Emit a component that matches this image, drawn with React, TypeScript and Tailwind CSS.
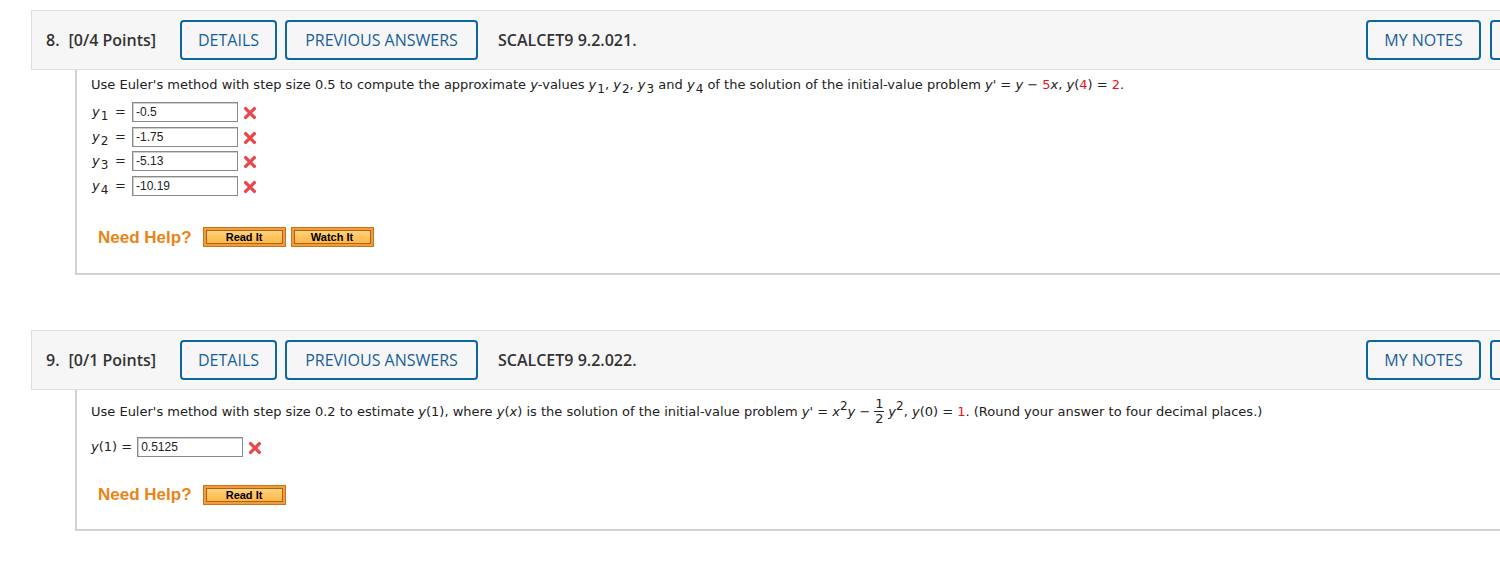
import React from "react";

const BODY = { fontFamily: "'DejaVu Sans', Verdana, sans-serif" };
const HEAD = { fontFamily: "'Open Sans', 'Noto Sans', sans-serif" };
const ARIAL = { fontFamily: "'Liberation Sans', Arial, sans-serif" };

function WrongMark() {
  return (
    <svg width="14" height="14" viewBox="0 0 16 16" className="ml-[5px] mt-[2px] shrink-0">
      <path d="M3 3 L13 13 M13 3 L3 13" stroke="#e8474c" strokeWidth="3.8" strokeLinecap="round" />
    </svg>
  );
}

function HeadButton({ label, width }: { label?: string; width: string }) {
  return (
    <button
      className={`${width} h-10 shrink-0 rounded-[4px] border-2 border-[#0d66a1] text-[16px] text-[#16609a]`}
      style={HEAD}
    >
      {label}
    </button>
  );
}

function QuestionHeader({ num, points, code }: { num: string; points: string; code: string }) {
  return (
    <div className="flex h-[60px] w-[1700px] items-center border border-[#dedede] bg-[#f6f6f6] pl-[14px] pr-[50px]" style={HEAD}>
      <span className="w-[134px] text-[16px] font-semibold text-[#333]">
        {num}
        <span className="ml-[9px]">{points}</span>
      </span>
      <div className="flex gap-2">
        <HeadButton label="DETAILS" width="w-[97px]" />
        <HeadButton label="PREVIOUS ANSWERS" width="w-[193px]" />
      </div>
      <span className="ml-[20px] text-[16px] font-semibold text-[#333]">{code}</span>
      <div className="ml-auto flex gap-[9px]">
        <HeadButton label="MY NOTES" width="w-[115px]" />
        {/* next header button, only its left edge fits in the window */}
        <HeadButton width="w-[190px]" />
      </div>
    </div>
  );
}

function HelpButton({ label }: { label: string }) {
  return (
    <span className="inline-flex h-5 w-[83px] items-center justify-center border border-[#c8741e] bg-[#f49c3a] p-[2px]">
      <span
        className="flex h-full w-full items-center justify-center border border-[#a8641c] bg-gradient-to-b from-[#ffd27a] to-[#fdb743] text-[11px] font-bold text-black"
        style={ARIAL}
      >
        {label}
      </span>
    </span>
  );
}

function NeedHelp({ watch }: { watch?: boolean }) {
  return (
    <div className="flex items-center">
      <span className="mr-[11px] text-[17px] font-bold text-[#ea8414]" style={ARIAL}>
        Need Help?
      </span>
      <div className="flex gap-[5px]">
        <HelpButton label="Read It" />
        {watch && <HelpButton label="Watch It" />}
      </div>
    </div>
  );
}

function Y({ sub }: { sub?: string }) {
  return (
    <span>
      <i>y</i>
      {sub && <span className="relative top-[4px] ml-px text-[12px]">{sub}</span>}
    </span>
  );
}

function AnswerInput({ value, width }: { value: string; width: string }) {
  return (
    <div
      className={`${width} flex h-5 items-center border border-[#8a8a8a] px-[3px] text-[12px] text-[#222] shadow-[inset_1px_1px_0_#cfcfcf]`}
      style={ARIAL}
    >
      {value}
    </div>
  );
}

function Red({ children }: { children: React.ReactNode }) {
  return <span className="text-[#e8121a]">{children}</span>;
}

export default function App() {
  const rows = [
    ["1", "-0.5"],
    ["2", "-1.75"],
    ["3", "-5.13"],
    ["4", "-10.19"],
  ];

  return (
    <div className="h-[564px] w-[1500px] overflow-hidden bg-white">
      <div className="w-[1700px] pl-[31px] pt-[10px] text-[13px] text-[#222]" style={BODY}>
        {/* Question 8 */}
        <QuestionHeader num="8." points="[0/4 Points]" code="SCALCET9 9.2.021." />
        <div className="ml-[44px] h-[205px] border-b-2 border-l-2 border-[#d2d2d2] pl-[14px] pt-[6px]">
          <p className="leading-[18px]">
            Use Euler's method with step size 0.5 to compute the approximate <i>y</i>-values <Y sub="1" />, <Y sub="2" />,{" "}
            <Y sub="3" /> and <Y sub="4" /> of the solution of the initial-value problem <i>y'</i> = <i>y</i> − <Red>5</Red>
            <i>x</i>, <i>y</i>(<Red>4</Red>) = <Red>2</Red>.
          </p>
          <div className="mt-[8px] flex flex-col gap-[4.5px]">
            {rows.map(([s, v]) => (
              <div key={s} className="flex h-5 items-center">
                <span className="w-[24px] pl-px">
                  <Y sub={s} />
                </span>
                <span className="w-[17px]">=</span>
                <AnswerInput value={v} width="w-[106px]" />
                <WrongMark />
              </div>
            ))}
          </div>
          <div className="ml-[7px] mt-[29px]">
            <NeedHelp watch />
          </div>
        </div>

        <div className="h-[55px]" />

        {/* Question 9 */}
        <QuestionHeader num="9." points="[0/1 Points]" code="SCALCET9 9.2.022." />
        <div className="ml-[44px] h-[141px] border-b-2 border-l-2 border-[#d2d2d2] pl-[14px] pt-[7px]">
          <p className="flex items-center leading-[18px]">
            <span>
              Use Euler's method with step size 0.2 to estimate <i>y</i>(1), where <i>y</i>(<i>x</i>) is the solution of the
              initial-value problem <i>y'</i> = <i>x</i>
              <sup className="text-[12px]">2</sup>
              <i>y</i> −{" "}
            </span>
            <span className="mx-[4px] inline-flex flex-col items-center text-[13px] leading-[14px]">
              <span>1</span>
              <span className="h-px w-[10px] bg-[#222]" />
              <span>2</span>
            </span>
            <span>
              <i>y</i>
              <sup className="text-[12px]">2</sup>, <i>y</i>(0) = <Red>1</Red>. (Round your answer to four decimal places.)
            </span>
          </p>
          <div className="mt-[11px] flex h-5 items-center">
            <span className="mr-[5px]">
              <i>y</i>(1) =
            </span>
            <AnswerInput value="0.5125" width="w-[106px]" />
            <WrongMark />
          </div>
          <div className="ml-[7px] mt-[25px]">
            <NeedHelp />
          </div>
        </div>
      </div>
    </div>
  );
}
